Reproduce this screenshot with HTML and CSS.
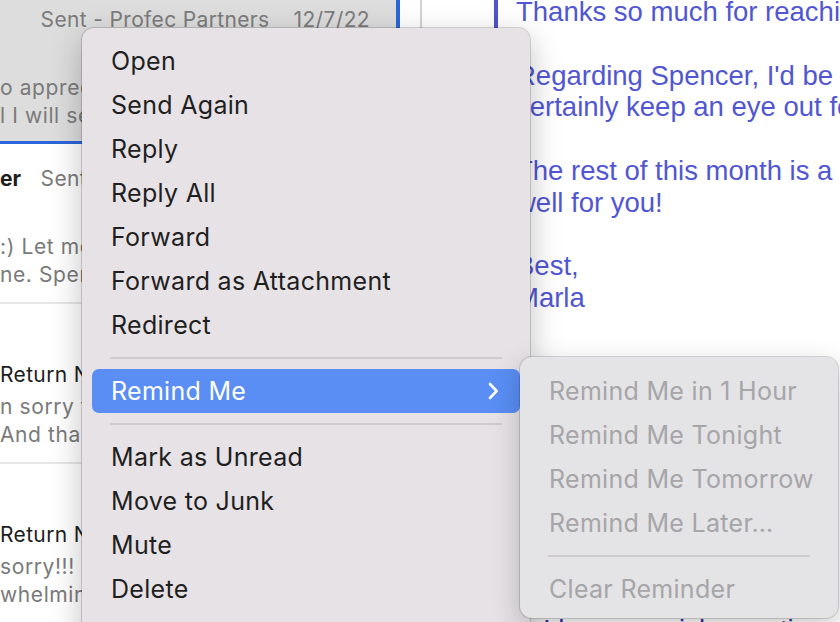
FILE: index.html
```html
<!DOCTYPE html>
<html lang="en">
<head>
<meta charset="utf-8">
<title>Mail</title>
<link rel="stylesheet" href="styles.css">
</head>
<body>
<div class="app">
  <div class="list">
    <div class="rows">
      <div class="row selected">
        <div class="line1"><span class="name"></span><span class="meta"><span>Sent - Profec Partners</span><span>12/7/22</span></span></div>
        <div class="subject"></div>
        <div class="preview">o appreciate your help with this, and</div>
        <div class="preview">l I will send over his resume shortly.</div>
      </div>
      <div class="row">
        <div class="line1"><span class="name">er</span><span class="meta"><span>Sent - Profec Partners</span><span>12/7/22</span></span></div>
        <div class="subject"></div>
        <div class="preview">:) Let me know if you need anything</div>
        <div class="preview">ne. Spencer is looking forward to it.</div>
      </div>
      <div class="row">
        <div class="line1"><span class="name"></span><span class="meta"><span>12/6/22</span></span></div>
        <div class="subject">Return Notice</div>
        <div class="preview">n sorry for the delay in getting back</div>
        <div class="preview">And thank you again for your patience.</div>
      </div>
      <div class="row">
        <div class="line1"><span class="name"></span><span class="meta"><span>12/5/22</span></span></div>
        <div class="subject">Return Notice</div>
        <div class="preview">sorry!!! This week has been so</div>
        <div class="preview">whelming with everything going on.</div>
      </div>
    </div>
  </div>
  <div class="reader">
    <div class="quote">
      <p>Thanks so much for reaching out, and for thinking of us.</p>
      <p>Regarding Spencer, I'd be happy to pass his resume along and will<br>certainly keep an eye out for any openings that might be a good fit.</p>
      <p>The rest of this month is a bit hectic for me, but I hope all is going<br>well for you!</p>
      <p>Best,<br>Marla</p>
      <div class="nested">I have a quick question about the schedule for next week.</div>
    </div>
  </div>
</div>

<div class="menu">
  <div class="item">Open</div>
  <div class="item">Send Again</div>
  <div class="item">Reply</div>
  <div class="item">Reply All</div>
  <div class="item">Forward</div>
  <div class="item">Forward as Attachment</div>
  <div class="item">Redirect</div>
  <div class="sep"></div>
  <div class="item active"><span>Remind Me</span><svg class="chev" width="11" height="18" viewBox="0 0 11 18"><path d="M2 2 L8.6 9 L2 16" fill="none" stroke="#fff" stroke-width="2.6" stroke-linecap="round" stroke-linejoin="round"/></svg></div>
  <div class="sep"></div>
  <div class="item">Mark as Unread</div>
  <div class="item">Move to Junk</div>
  <div class="item">Mute</div>
  <div class="item">Delete</div>
  <div class="item">Move to</div>
</div>

<div class="submenu">
  <div class="item disabled">Remind Me in 1 Hour</div>
  <div class="item disabled">Remind Me Tonight</div>
  <div class="item disabled">Remind Me Tomorrow</div>
  <div class="item disabled">Remind Me Later…</div>
  <div class="sep"></div>
  <div class="item disabled">Clear Reminder</div>
</div>
</body>
</html>
```
FILE: styles.css
```css
* { box-sizing: border-box; }
html, body { margin: 0; padding: 0; }
body {
  width: 840px;
  height: 622px;
  overflow: hidden;
  position: relative;
  background: #ffffff;
  font-family: Inter, "Noto Sans", sans-serif;
}
.app {
  display: flex;
  height: 622px;
}
.list {
  width: 422px;
  flex: none;
  padding-right: 20px;
  border-right: 2px solid #d3d3d3;
  overflow: hidden;
}
.rows { margin-top: -15px; }
.row {
  height: 160px;
  padding: 16px 30px 0 0;
  border-bottom: 2px solid #e6e6e6;
  white-space: nowrap;
  overflow: hidden;
  font-size: 21px;
  letter-spacing: 0.35px;
}
.row.selected {
  height: 159px;
  padding-right: 26px;
  background: #dddddd;
  border-bottom: 3px solid #2a66d9;
  border-right: 4px solid #2a66d9;
}
.line1 {
  display: flex;
  justify-content: space-between;
  height: 37px;
  line-height: 38px;
}
.name { font-weight: 700; color: #1e1e1e; letter-spacing: 0; }
.meta { display: flex; gap: 24px; color: #7b7b7b; }
.subject {
  height: 36px;
  line-height: 36px;
  color: #1e1e1e;
}
.preview {
  height: 28px;
  line-height: 28px;
  color: #7a7a7a;
  letter-spacing: 0.6px;
}
.reader {
  flex: 1;
  min-width: 0;
  padding-left: 72px;
  overflow: hidden;
}
.quote {
  margin-top: -4px;
  border-left: 4px solid #5054cf;
  padding-left: 18px;
  font-family: "Liberation Sans", Arial, sans-serif;
  font-size: 27.5px;
  line-height: 31.75px;
  color: #5156d2;
  white-space: nowrap;
}
.quote p { margin: 0 0 31.75px; }
.nested {
  margin-top: 300px;
  padding-left: 27px;
  color: #2e31a0;
}
.menu {
  position: absolute;
  left: 82px;
  top: 28px;
  width: 448px;
  height: 640px;
  padding: 11px 10px;
  background: #e7e2e5;
  border-radius: 12px;
  box-shadow: 0 0 0 1px rgba(0, 0, 0, 0.15), 0 10px 32px rgba(0, 0, 0, 0.25);
  font-size: 25px;
  letter-spacing: 0.3px;
  color: #1f1f1f;
}
.item {
  height: 44px;
  line-height: 44px;
  padding: 0 21px 0 19px;
  border-radius: 7px;
  display: flex;
  align-items: center;
  justify-content: space-between;
  white-space: nowrap;
}
.item.active {
  background: #5a8ef5;
  color: #ffffff;
}
.chev { display: block; }
.sep {
  height: 22px;
  padding: 0 18px;
  display: flex;
  align-items: center;
}
.sep::before {
  content: "";
  flex: 1;
  height: 2px;
  background: #cfcacd;
}
.submenu {
  position: absolute;
  left: 520px;
  top: 357px;
  width: 318px;
  height: 261px;
  padding: 12px 10px 6px;
  background: #e4e3e6;
  border-radius: 12px;
  box-shadow: 0 0 0 1px rgba(0, 0, 0, 0.14), 0 10px 30px rgba(0, 0, 0, 0.22);
  font-size: 25px;
  letter-spacing: 0.3px;
}
.item.disabled { color: #a6a5a8; }
```
